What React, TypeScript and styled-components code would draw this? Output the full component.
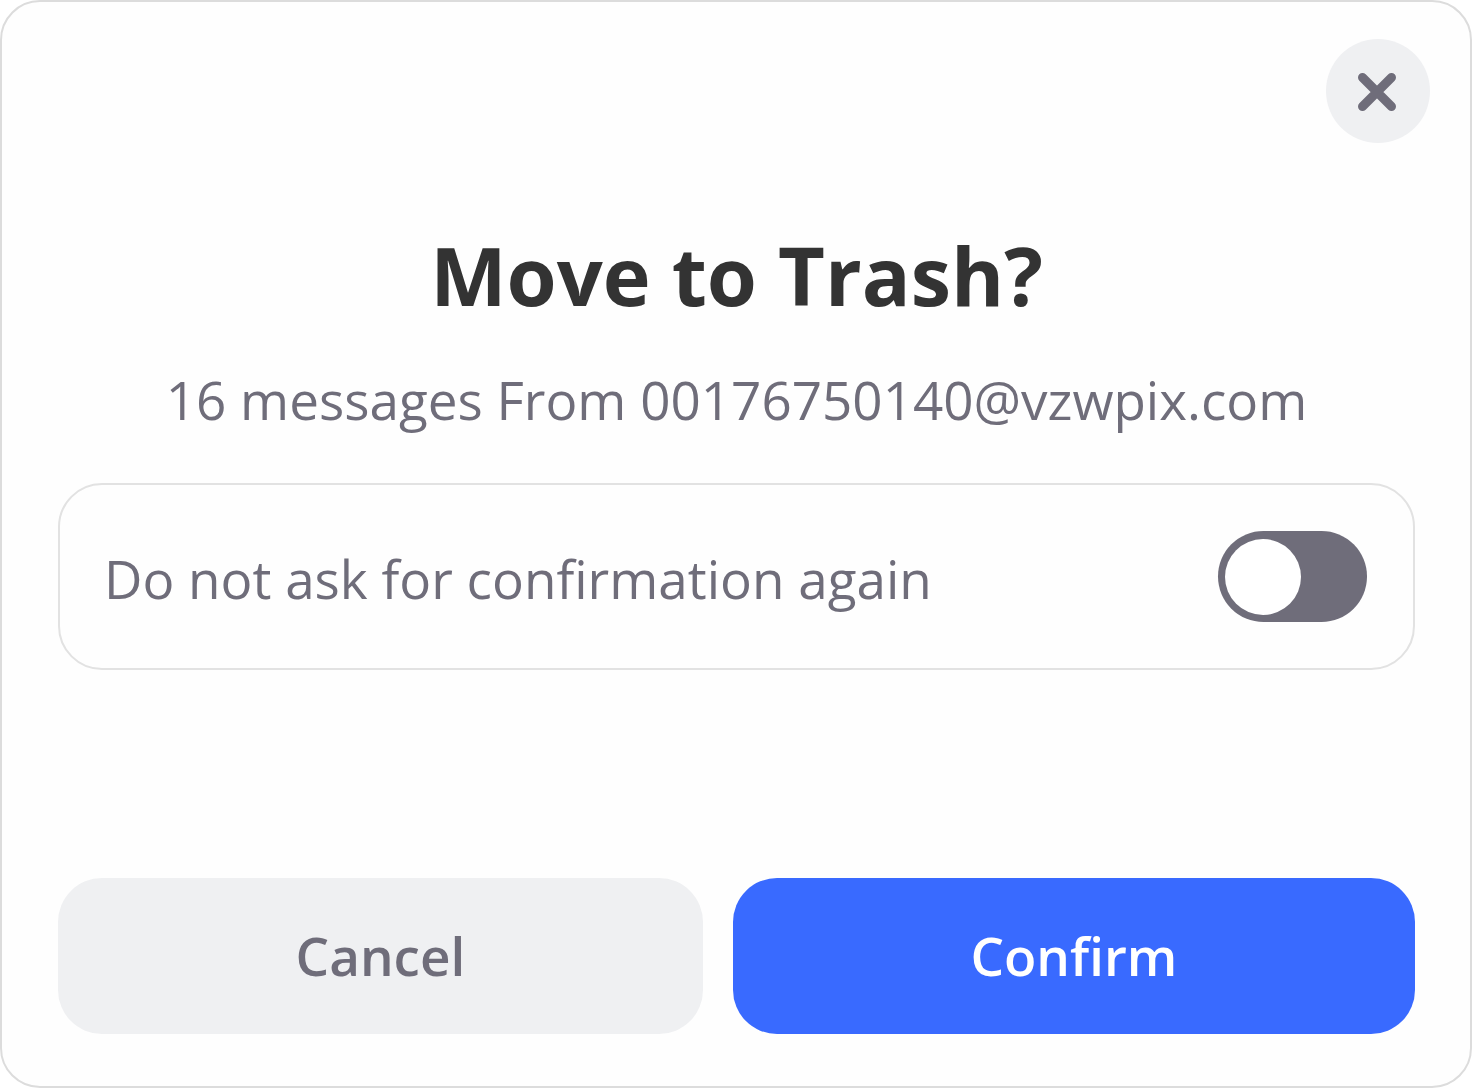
import React, { useState } from "react";
import styled, { createGlobalStyle } from "styled-components";

const GlobalStyle = createGlobalStyle`
  *, *::before, *::after {
    box-sizing: border-box;
  }

  body {
    margin: 0;
    background: #fff;
    color: #6f6d7a;
    font-family: "Segoe UI", "Open Sans", "Noto Sans", sans-serif;
    font-variant-ligatures: none;
  }
`;

const Dialog = styled.main`
  display: flex;
  flex-direction: column;
  min-height: 100vh;
  padding-bottom: 52px;
  border: 2px solid #dcdcdc;
  border-radius: 40px;
  background: #fefefe;
`;

const Header = styled.header`
  display: flex;
  justify-content: flex-end;
  padding: 37px 40px 0;
`;

const CloseButton = styled.button`
  display: flex;
  align-items: center;
  justify-content: center;
  width: 104px;
  height: 104px;
  padding: 0;
  border: 0;
  border-radius: 50%;
  background: #eff0f2;
  color: #6f6d7a;
  cursor: pointer;
`;

const Content = styled.section`
  display: flex;
  flex-direction: column;
  padding: 72px 55px 48px 56px;
`;

const Title = styled.h1`
  margin: 0 0 27px;
  color: #333;
  font-size: 81px;
  font-weight: 700;
  line-height: 120px;
  text-align: center;
`;

const Summary = styled.p`
  margin: 0 0 45px;
  font-size: 53px;
  line-height: 76px;
  text-align: center;
`;

const Option = styled.label`
  display: flex;
  align-items: center;
  justify-content: space-between;
  gap: 24px;
  min-height: 187px;
  padding: 0 46px 0 44px;
  border: 2px solid #e2e2e2;
  border-radius: 44px;
  font-size: 53px;
  line-height: 76px;
  cursor: pointer;
`;

const OptionText = styled.span`
  padding-top: 4px;
`;

const Switch = styled.input`
  display: flex;
  flex: none;
  align-items: center;
  appearance: none;
  width: 149px;
  height: 91px;
  margin: 0;
  padding: 0 7px;
  border-radius: 46px;
  background: #6f6d7a;
  cursor: pointer;

  &::before {
    content: "";
    width: 76px;
    height: 76px;
    border-radius: 50%;
    background: #fff;
  }

  &:checked {
    justify-content: flex-end;
    background: #396aff;
  }
`;

const Actions = styled.footer`
  display: flex;
  gap: 30px;
  margin-top: auto;
  padding: 0 55px 0 56px;
`;

const ActionButton = styled.button<{ $primary?: boolean }>`
  flex: 1 1 auto;
  height: 156px;
  padding: 0 24px;
  border: 0;
  border-radius: 44px;
  background: ${({ $primary }) => ($primary ? "#396aff" : "#eff0f2")};
  color: ${({ $primary }) => ($primary ? "#fff" : "#6f6d7a")};
  font-family: inherit;
  font-size: 53px;
  font-weight: 600;
  line-height: 76px;
  cursor: pointer;
`;

function CloseIcon() {
  return (
    <svg width="40" height="40" viewBox="0 0 40 40" fill="none" aria-hidden="true">
      <path d="M4.5 6.5 33.5 35.5M33.5 6.5 4.5 35.5" stroke="currentColor" strokeWidth="9" strokeLinecap="round" />
    </svg>
  );
}

export default function App() {
  const [skip, setSkip] = useState(false);

  return (
    <>
      <GlobalStyle />
      <Dialog role="dialog" aria-labelledby="dialog-title">
        <Header>
          <CloseButton type="button" aria-label="Close">
            <CloseIcon />
          </CloseButton>
        </Header>
        <Content>
          <Title id="dialog-title">Move to Trash?</Title>
          <Summary>16 messages From 00176750140@vzwpix.com</Summary>
          <Option htmlFor="skip-confirmation">
            <OptionText>Do not ask for confirmation again</OptionText>
            <Switch
              id="skip-confirmation"
              type="checkbox"
              role="switch"
              checked={skip}
              onChange={(event) => setSkip(event.target.checked)}
            />
          </Option>
        </Content>
        <Actions>
          <ActionButton type="button">Cancel</ActionButton>
          <ActionButton type="button" $primary>
            Confirm
          </ActionButton>
        </Actions>
      </Dialog>
    </>
  );
}
